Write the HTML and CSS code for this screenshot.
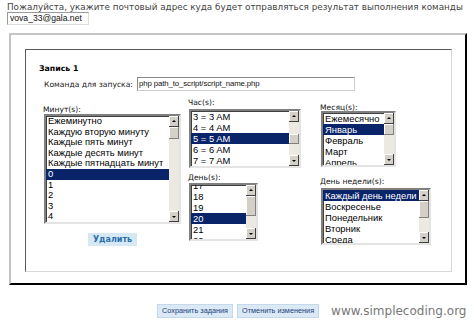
FILE: index.html
```html
<!DOCTYPE html>
<html>
<head>
<meta charset="utf-8">
<link rel="stylesheet" href="styles.css">
</head>
<body>
<div class="intro">Пожалуйста, укажите почтовый адрес куда будет отправляться результат выполнения команды</div>
<div class="email">vova_33@gala.net</div>
<div class="outer">
  <div class="inner">
    <div class="title">Запись 1</div>
    <div class="cmd-row">
      <span class="cmd-label">Команда для запуска:</span>
      <div class="cmd-input">php path_to_script/script_name.php</div>
    </div>
    <div class="cols">
      <div class="col col1">
        <div class="lbl">Минут(s):</div>
        <div class="list list-min">
          <div class="items tight">
            <div class="it">Ежеминутно</div>
            <div class="it">Каждую вторую минуту</div>
            <div class="it">Каждые пять минут</div>
            <div class="it">Каждые десять минут</div>
            <div class="it">Каждые пятнадцать минут</div>
            <div class="it sel">0</div>
            <div class="it">1</div>
            <div class="it">2</div>
            <div class="it">3</div>
            <div class="it">4</div>
          </div>
          <div class="sb"><div class="up"></div><div class="thumb t-min"></div><div class="track"></div><div class="down"></div></div>
        </div>
        <div class="del-wrap"><span class="del">Удалить</span></div>
      </div>
      <div class="col col2">
        <div class="lbl">Час(s):</div>
        <div class="list list-hour">
          <div class="items">
            <div class="it">3 = 3 AM</div>
            <div class="it">4 = 4 AM</div>
            <div class="it sel">5 = 5 AM</div>
            <div class="it">6 = 6 AM</div>
            <div class="it">7 = 7 AM</div>
          </div>
          <div class="sb"><div class="up"></div><div class="track"></div><div class="thumb t-hour"></div><div class="track"></div><div class="down"></div></div>
        </div>
        <div class="lbl lbl-day">День(s):</div>
        <div class="list list-day">
          <div class="items shift">
            <div class="it">17</div>
            <div class="it">18</div>
            <div class="it">19</div>
            <div class="it sel">20</div>
            <div class="it">21</div>
            <div class="it">22</div>
          </div>
          <div class="sb"><div class="up"></div><div class="thumb t-day"></div><div class="track"></div><div class="down"></div></div>
        </div>
      </div>
      <div class="col col3">
        <div class="lbl">Месяц(s):</div>
        <div class="list list-month">
          <div class="items">
            <div class="it">Ежемесячно</div>
            <div class="it sel">Январь</div>
            <div class="it">Февраль</div>
            <div class="it">Март</div>
            <div class="it">Апрель</div>
          </div>
          <div class="sb"><div class="up"></div><div class="thumb t-month"></div><div class="track"></div><div class="down"></div></div>
        </div>
        <div class="lbl lbl-week">День недели(s):</div>
        <div class="list list-week">
          <div class="items">
            <div class="it sel">Каждый день недели</div>
            <div class="it">Воскресенье</div>
            <div class="it">Понедельник</div>
            <div class="it">Вторник</div>
            <div class="it">Среда</div>
          </div>
          <div class="sb"><div class="up"></div><div class="thumb t-week"></div><div class="track"></div><div class="down"></div></div>
        </div>
      </div>
    </div>
  </div>
</div>
<div class="footer">
  <span class="fbtn">Сохранить задания</span>
  <span class="fbtn">Отменить изменения</span>
  <span class="mark">www.simplecoding.org</span>
</div>
</body>
</html>
```
FILE: styles.css
```css
html, body { margin: 0; padding: 0; background: #fff; }
body { font-family: "DejaVu Sans", sans-serif; color: #000; width: 474px; height: 327px; overflow: hidden; }

.intro {
  font-size: 8.8px; color: #444; line-height: 10px; height: 10px;
  padding: 2px 0 0 7px; white-space: nowrap;
}
.email {
  margin: 0 0 0 7px; width: 78px; height: 11px;
  border: 1px solid #9a9a9a; border-right-color: #ddd; border-bottom-color: #ddd;
  font-family: "Liberation Sans", sans-serif; font-size: 8.6px; line-height: 11px;
  padding-left: 2px; color: #111;
}

.outer {
  margin: 8px 0 0 9px; width: 440px; height: 234px;
  border: 2px solid #c4c4c4; border-right-color: #000; border-bottom-color: #000;
  padding: 14px 0 0 14px;
}
.inner {
  width: 427px; height: 223px;
  border: 1px solid #5a5a5a; border-right-color: #d8d8d8; border-bottom-color: #d8d8d8;
  box-sizing: border-box;
  padding: 13px 0 0 13px;
}
.title { font-weight: bold; font-size: 7.8px; line-height: 11px; height: 11px; }
.cmd-row { display: flex; align-items: center; margin: 3px 0 0 5px; }
.cmd-label { font-size: 7.6px; color: #222; width: 93px; white-space: nowrap; }
.cmd-input {
  width: 215px; height: 12px; border: 1px solid #888; border-right-color: #ccc; border-bottom-color: #ccc;
  font-family: "Liberation Sans", sans-serif; font-size: 7.8px; letter-spacing: -0.1px; line-height: 12px; padding-left: 1px; color: #111;
  white-space: nowrap;
}

.cols { display: flex; margin: 0 0 0 5px; }
.col { display: flex; flex-direction: column; }
.col1 { width: 145px; margin-top: 14px; }
.col2 { width: 132px; margin-top: 7px; }
.col3 { margin-top: 12px; }
.lbl { font-size: 7.6px; line-height: 10px; height: 10px; color: #111; margin-left: -1px; white-space: nowrap; }
.lbl-day { margin-top: 5px; }
.lbl-week { margin-top: 10px; }

.list {
  display: flex; background: #fff; overflow: hidden;
  border: 2px solid #808080; border-right-color: #e4e4e4; border-bottom-color: #e4e4e4;
  box-shadow: inset 1px 1px 0 #404040;
  font-family: "Liberation Sans", sans-serif; font-size: 9.4px;
}
.items { flex: 1; overflow: hidden; min-width: 0; }
.items.shift { margin-top: -5px; }
.it { height: 11px; line-height: 11px; padding-left: 2px; white-space: nowrap; color: #000; }
.items.tight .it { height: 10.6px; line-height: 10.6px; }
.it.sel { background: #0a246a; color: #fff; }

.sb { width: 10px; flex-shrink: 0; display: flex; flex-direction: column; background: #ece9e2; }
.up, .down {
  height: 11px; background: #d4d0c8; position: relative;
  box-shadow: inset -1px -1px 0 #404040, inset 1px 1px 0 #fff;
}
.up::after, .down::after {
  content: ""; position: absolute; left: 3px; width: 0; height: 0;
  border-left: 2px solid transparent; border-right: 2px solid transparent;
}
.up::after { top: 4px; border-bottom: 2px solid #000; }
.down::after { top: 5px; border-top: 2px solid #000; }
.thumb { background: #d4d0c8; box-shadow: inset -1px -1px 0 #808080, inset 1px 1px 0 #fff; }
.track { flex: 1; }
.t-min { height: 12px; }
.t-hour { height: 10px; }
.t-day { height: 20px; }
.t-month { height: 11px; }
.t-week { height: 17px; }

.list-min { width: 133px; height: 106px; margin-top: -1px; }
.list-hour { width: 108px; height: 55px; margin-top: 1px; }
.list-day { width: 65px; height: 54px; margin-top: 0; }
.list-month { width: 71px; height: 52px; margin-top: -2px; }
.list-week { width: 106px; height: 53px; margin-top: 1px; }

.del-wrap { display: flex; justify-content: center; margin-top: 9px; width: 137px; }
.del {
  background: #d7e8f5; color: #2a6fa8; font-weight: bold; font-size: 8px;
  padding: 0 5px; height: 13px; line-height: 13px;
}

.footer { display: flex; align-items: center; margin: 19px 0 0 157px; }
.fbtn {
  background: #dbe9f6; border: 1px solid #c6d9ea; color: #1d3d7a; flex-shrink: 0; white-space: nowrap;
  font-family: "Liberation Sans", sans-serif; font-size: 7.3px; height: 12px; line-height: 12px;
  padding: 0 4px; margin-right: 4px;
}
.mark {
  font-family: "DejaVu Sans", sans-serif; font-size: 12px; color: #777; margin-left: 8px; white-space: nowrap; flex-shrink: 0;
}
```
